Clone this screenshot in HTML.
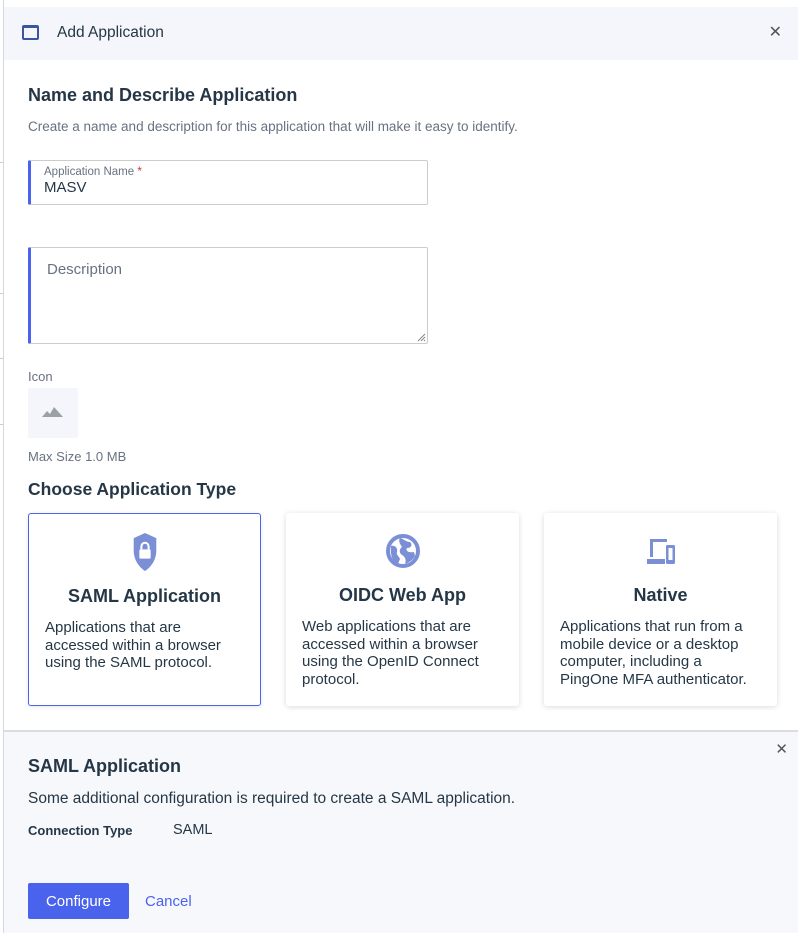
<!DOCTYPE html>
<html><head><style>
*{box-sizing:border-box;margin:0;padding:0}
body{width:798px;height:933px;overflow:hidden;background:#fff;font-family:"Liberation Sans",sans-serif;color:#253746;position:relative}
.leftline{position:absolute;left:3px;top:0;width:1px;height:933px;background:#d5d8de}
.tick{position:absolute;left:0;width:3px;height:1px;background:#ccc}
.hdr{position:absolute;left:4px;top:7px;width:794px;height:53px;background:#f5f6fb}
.hdr .t{position:absolute;left:53px;top:17px;font-size:15.5px;color:#253746}
.hdr .ic{position:absolute;left:18px;top:18px;width:17px;height:15px;border:2px solid #3d55a0;border-top-width:3px;border-radius:2px}
.hdr .x{position:absolute;right:16px;top:15px;font-size:16px;color:#555}
.abs{position:absolute}
h2{position:absolute;left:28px;top:85px;font-size:18px;font-weight:bold}
.sub{left:28px;top:119px;font-size:13.5px;color:#687282}
.inp{left:28px;top:160px;width:400px;height:45px;border:1px solid #ccc;border-left:3px solid #4a63ec;border-radius:2px}
.ta{left:28px;top:247px;width:400px;height:97px;border:1px solid #ccc;border-left:3px solid #4a63ec;border-radius:2px}
.card{position:absolute;top:513px;width:233px;height:193px;background:#fff;border-radius:3px;box-shadow:0 1px 6px rgba(0,0,0,.15);text-align:left}
.card.sel{border:1px solid #4a63ec;box-shadow:0 1px 4px rgba(0,0,0,.1)}
.card h3{position:absolute;top:72px;left:0;width:100%;text-align:center;font-size:18px;font-weight:bold}
.card p{position:absolute;top:105px;left:16px;font-size:15px;line-height:17.5px;color:#253746;white-space:nowrap}
.card svg{position:absolute;left:50%;top:20px;transform:translateX(-50%)}
.panel{position:absolute;left:4px;top:730px;width:794px;height:203px;background:#f7f8fc;border-top:2px solid #dcdde2}
</style></head><body>
<div class="leftline"></div>
<div class="tick" style="top:162px"></div><div class="tick" style="top:293px"></div><div class="tick" style="top:358px"></div><div class="tick" style="top:424px"></div>
<div class="hdr"><div class="ic"></div><div class="t">Add Application</div><div class="x">✕</div></div>
<h2>Name and Describe Application</h2>
<div class="abs sub">Create a name and description for this application that will make it easy to identify.</div>
<div class="abs inp"><div class="abs" style="left:13px;top:5px;font-size:11.5px;color:#687282">Application Name <span style="color:#c33">*</span></div><div class="abs" style="left:13px;top:18px;font-size:15px">MASV</div></div>
<div class="abs ta"><div class="abs" style="left:16px;top:13px;font-size:15px;color:#687282">Description</div>
<svg class="abs" style="right:1px;bottom:1px" width="10" height="10"><path d="M9 2L2 9M9 5L5 9M9 8L8 9" stroke="#888" stroke-width="1"/></svg></div>
<div class="abs" style="left:28px;top:369px;font-size:13px;color:#687282">Icon</div>
<div class="abs" style="left:28px;top:388px;width:50px;height:50px;background:#f5f6fb;border-radius:2px">
<svg class="abs" style="left:14px;top:18px" width="22" height="12"><path d="M0 11L5 5L8 8L12 1L21 11Z" fill="#9ca1a8"/></svg></div>
<div class="abs" style="left:28px;top:449px;font-size:13px;color:#687282">Max Size 1.0 MB</div>
<div class="abs" style="left:28px;top:479px;font-size:17.5px;font-weight:bold">Choose Application Type</div>

<div class="card sel" style="left:28px">
<svg width="26" height="38" viewBox="0 0 24 37" style="top:19px"><path d="M12 0L23 5V17C23 26 18 33 12 37C6 33 1 26 1 17V5Z" fill="#7b8fd6"/><rect x="6.5" y="16" width="11" height="9" rx="1" fill="#fff"/><path d="M8.5 16V13A3.5 3.5 0 0 1 15.5 13V16" stroke="#fff" stroke-width="2" fill="none"/></svg>
<h3>SAML Application</h3><p>Applications that are<br>accessed within a browser<br>using the SAML protocol.</p></div>
<div class="card" style="left:286px">
<svg width="34" height="34" viewBox="0 0 34 34" style="top:21px"><circle cx="17" cy="17" r="15" fill="#fff" stroke="#7b8fd6" stroke-width="4"/><path d="M5 12C9 11 12 14 11 18C10 21 13 22 14 25L12 30C7 28 4 22 5 12ZM14 4C18 5 20 8 24 8C27 11 25 14 21 14C19 17 23 19 28 18L29 22C26 27 22 29 19 30C21 25 18 22 16 21C13 19 13 15 16 13C14 10 12 7 14 4Z" fill="#7b8fd6"/></svg>
<h3>OIDC Web App</h3><p>Web applications that are<br>accessed within a browser<br>using the OpenID Connect<br>protocol.</p></div>
<div class="card" style="left:544px">
<svg width="28" height="28" viewBox="0 0 28 28" style="top:24px"><path d="M3 2H20V5H6V20H3ZM0 22H18V27H0Z" fill="#7b8fd6"/><rect x="19" y="8" width="9" height="19" rx="1.5" fill="#7b8fd6"/><rect x="21.5" y="11" width="4" height="12" fill="#fff"/></svg>
<h3>Native</h3><p>Applications that run from a<br>mobile device or a desktop<br>computer, including a<br>PingOne MFA authenticator.</p></div>

<div class="panel">
<div class="abs" style="right:10px;top:8px;font-size:15px;color:#555">✕</div>
<div class="abs" style="left:24px;top:24px;font-size:18px;font-weight:bold">SAML Application</div>
<div class="abs" style="left:24px;top:58px;font-size:15.5px">Some additional configuration is required to create a SAML application.</div>
<div class="abs" style="left:24px;top:91px;font-size:13px;font-weight:bold">Connection Type</div>
<div class="abs" style="left:169px;top:90px;font-size:14.5px">SAML</div>
<div class="abs" style="left:24px;top:151px;width:101px;height:36px;background:#4a63ec;border-radius:2px;color:#fff;font-size:15px;text-align:center;line-height:38px">Configure</div>
<div class="abs" style="left:141px;top:161px;font-size:15px;color:#4a63ec">Cancel</div>
</div>
</body></html>
